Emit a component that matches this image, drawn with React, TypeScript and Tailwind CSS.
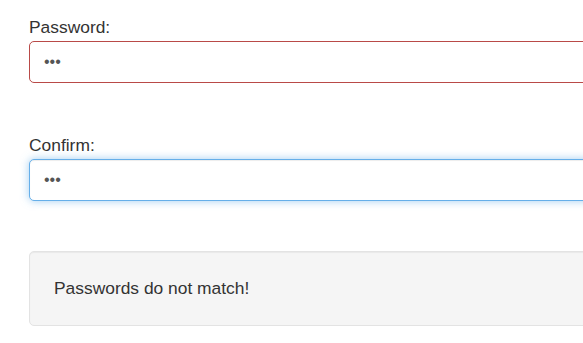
export default function App() {
  return (
    <div className="w-full h-[343px] overflow-hidden bg-white font-['Liberation_Sans',Arial,sans-serif] text-[#333]">
      <div className="w-[640px] pl-[29px] pt-[16px]">
        <label className="block text-[17.4px] leading-[22px] mb-[3px]">Password:</label>
        <input
          type="password"
          readOnly
          defaultValue="abc"
          className="block w-full h-[42px] px-[14px] rounded-[5px] border border-[#b94a48] bg-white text-[16px] text-[#555] outline-none"
        />

        <label className="block text-[17.4px] leading-[22px] mt-[51px] mb-[3px]">Confirm:</label>
        <input
          type="password"
          readOnly
          defaultValue="abc"
          className="block w-full h-[42px] px-[14px] rounded-[5px] border border-[#66afe9] bg-white text-[16px] text-[#555] outline-none shadow-[inset_0_1px_1px_rgba(0,0,0,0.075),0_0_8px_rgba(102,175,233,0.6)]"
        />

        <div className="mt-[50px] h-[75px] flex items-center pl-[24px] rounded-[5px] border border-[#e3e3e3] bg-[#f5f5f5] shadow-[inset_0_1px_1px_rgba(0,0,0,0.05)]">
          <span className="text-[17.4px]">Passwords do not match!</span>
        </div>
      </div>
    </div>
  );
}
